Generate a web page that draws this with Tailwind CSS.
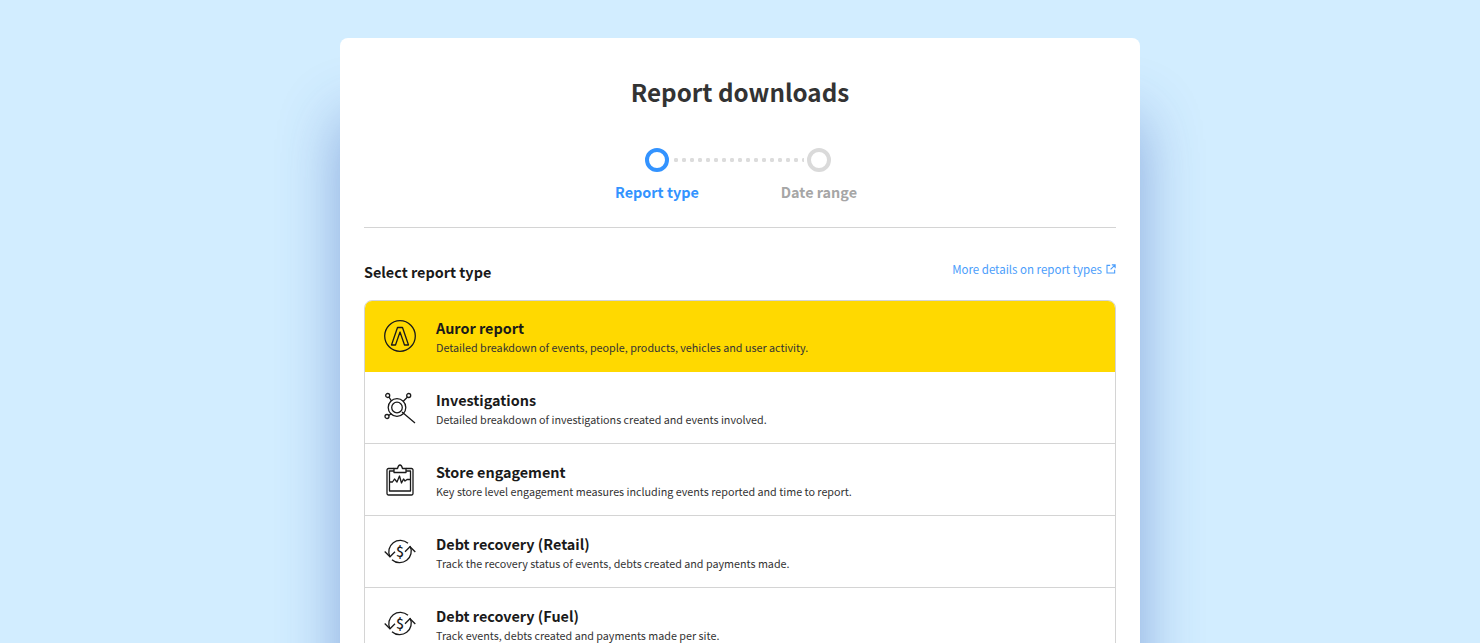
<!DOCTYPE html>
<html lang="en">
<head>
<meta charset="utf-8">
<title>Report downloads</title>
<script src="https://cdn.jsdelivr.net/npm/@tailwindcss/browser@4"></script>
</head>
<body class="h-[643px] overflow-hidden bg-[#d2edff] font-['Noto_Sans_CJK_SC','Liberation_Sans',sans-serif] text-[#1a1a1a]">
<main class="mx-auto mt-[38px] w-[800px] rounded-t-lg bg-white px-6 pb-6 shadow-[0_80px_60px_rgba(50,89,181,0.46)]">
  <h1 class="pt-[33px] text-center text-[24.2px] leading-[41px] font-semibold text-[#333333]">Report downloads</h1>
  <div class="mx-auto mt-[36px] w-[242px] -translate-x-[4px]">
    <div class="flex items-center pl-[30px]">
      <span class="h-6 w-6 shrink-0 rounded-full border-[4px] border-[#3393ff]"></span>
      <span class="mx-[3px] h-1 w-[132px] bg-[radial-gradient(circle,#dcdcdc_2px,transparent_2.3px)] bg-[length:8px_4px] bg-repeat-x"></span>
      <span class="h-6 w-6 shrink-0 rounded-full border-[4px] border-[#dadada]"></span>
    </div>
    <div class="mt-[8px] flex justify-between text-[14.4px] leading-6 font-semibold">
      <span class="text-[#3393ff]">Report type</span>
      <span class="text-[#a6a6a6]">Date range</span>
    </div>
  </div>
  <hr class="mt-[23px] border-t border-[#d4d4d4]">
  <div class="mt-[32px] flex items-start justify-between">
    <h2 class="text-[14.4px] leading-6 font-semibold text-[#1a1a1a]">Select report type</h2>
    <a class="mt-[-1px] flex items-center gap-1 text-[11.5px] leading-5 text-[#4a9dfb]">More details on report types
      <svg class="h-[10px] w-[10px]" viewBox="0 0 12 12" fill="none" stroke="currentColor" stroke-width="1.300"><path d="M5 1.600H1.200v9.200h9.200V7M7 1H11V5M11 1 5.500 6.500"/></svg>
    </a>
  </div>
  <ul class="mt-4 overflow-hidden rounded-lg border border-[#d4d4d4]">
    <li class="-mx-px -mt-px flex h-[72px] items-center gap-5 bg-[#ffd900] pl-5">
      <svg class="h-8 w-8 shrink-0" viewBox="0 0 32 32" fill="none" stroke="#1a1a1a" stroke-width="1.300"><circle cx="16" cy="16" r="15.300"/><path d="M7.500 25 13.500 7.500H18.500L24.500 25H20.500L16 12 11.500 25z" stroke-linejoin="round"/></svg>
      <div class="pt-[2px]"><h3 class="text-[14.4px] leading-[22px] font-bold">Auror report</h3><p class="text-[10.75px] leading-[18px] text-[#333333]">Detailed breakdown of events, people, products, vehicles and user activity.</p></div>
    </li>
    <li class="flex h-[72px] items-center gap-5 border-b border-[#d4d4d4] pt-px pl-[19px]">
      <svg class="h-8 w-8 shrink-0" viewBox="0 0 32 32" fill="none" stroke="#1a1a1a" stroke-width="1.300"><circle cx="13" cy="15.500" r="8.800"/><circle cx="13" cy="15.500" r="5.300"/><circle cx="3.700" cy="3.500" r="2"/><circle cx="24.700" cy="3.500" r="2"/><circle cx="3" cy="24.500" r="2"/><path d="M5 5.200 7.500 9M23.300 5.200 19 9.500M4.700 23.500 7.500 21.500M18 20 31 31"/></svg>
      <div class="pt-[2px]"><h3 class="text-[14.4px] leading-[22px] font-bold">Investigations</h3><p class="text-[10.75px] leading-[18px] text-[#333333]">Detailed breakdown of investigations created and events involved.</p></div>
    </li>
    <li class="flex h-[72px] items-center gap-5 border-b border-[#d4d4d4] pt-px pl-[19px]">
      <svg class="h-8 w-8 shrink-0" viewBox="0 0 32 32" fill="none" stroke="#1a1a1a" stroke-width="1.300" stroke-linejoin="round"><path d="M10 4.500H4.500a1.500 1.500 0 0 0-1.500 1.500v23.500a1.500 1.500 0 0 0 1.500 1.500h23a1.500 1.500 0 0 0 1.500-1.500V6a1.500 1.500 0 0 0-1.500-1.500H22"/><path d="M5.500 7H26.500V27H5.500z"/><path d="M10 8.500V4.500h3.500C14 2.500 15 1 16 1s2 1.500 2.500 3.500H22V8.500z" fill="#fff"/><path d="M5.500 18h3l2-3 2.500 3 2.500-6 2 7 2-4 1.500 2 2-1.500h3"/></svg>
      <div class="pt-[2px]"><h3 class="text-[14.4px] leading-[22px] font-bold">Store engagement</h3><p class="text-[10.75px] leading-[18px] text-[#333333]">Key store level engagement measures including events reported and time to report.</p></div>
    </li>
    <li class="flex h-[72px] items-center gap-5 border-b border-[#d4d4d4] pt-px pl-[19px]">
      <svg class="h-8 w-8 shrink-0" viewBox="0 0 32 32" fill="none" stroke="#1a1a1a" stroke-width="1.300"><path d="M6 21A11.500 11.500 0 0 1 24 7.300M26 10A11.500 11.500 0 0 1 8 23.700"/><path d="M.7 15.500 6 20.800 11 15.800M21 15.800 26 10.700 31.300 16"/><text x="16" y="20.500" text-anchor="middle" font-size="14" font-weight="500" fill="#1a1a1a" stroke="none" font-family="Noto Sans CJK SC">$</text></svg>
      <div class="pt-[2px]"><h3 class="text-[14.4px] leading-[22px] font-bold">Debt recovery (Retail)</h3><p class="text-[10.75px] leading-[18px] text-[#333333]">Track the recovery status of events, debts created and payments made.</p></div>
    </li>
    <li class="flex h-[72px] items-center gap-5 border-b border-[#d4d4d4] pt-px pl-[19px]">
      <svg class="h-8 w-8 shrink-0" viewBox="0 0 32 32" fill="none" stroke="#1a1a1a" stroke-width="1.300"><path d="M6 21A11.500 11.500 0 0 1 24 7.300M26 10A11.500 11.500 0 0 1 8 23.700"/><path d="M.7 15.500 6 20.800 11 15.800M21 15.800 26 10.700 31.300 16"/><text x="16" y="20.500" text-anchor="middle" font-size="14" font-weight="500" fill="#1a1a1a" stroke="none" font-family="Noto Sans CJK SC">$</text></svg>
      <div class="pt-[2px]"><h3 class="text-[14.4px] leading-[22px] font-bold">Debt recovery (Fuel)</h3><p class="text-[10.75px] leading-[18px] text-[#333333]">Track events, debts created and payments made per site.</p></div>
    </li>
  </ul>
</main>
</body>
</html>
